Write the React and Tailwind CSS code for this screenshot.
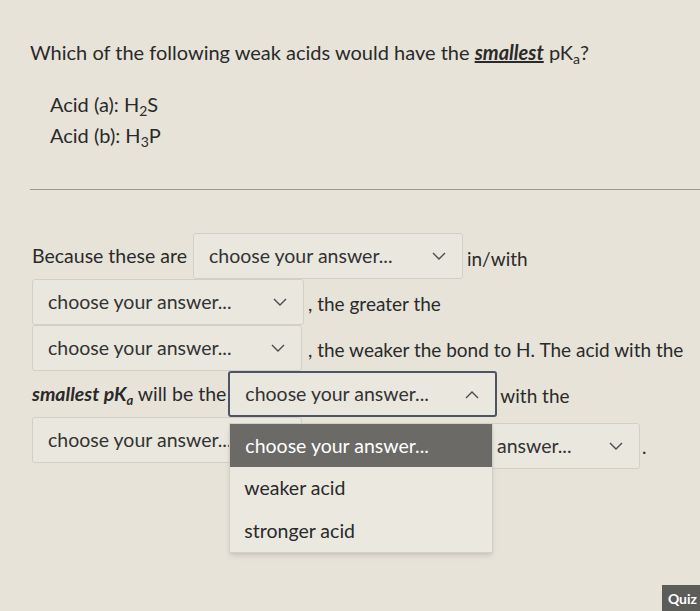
import React from "react";

const font = { fontFamily: "Lato, 'Open Sans', sans-serif" };

function Chevron({ up = false }) {
  return (
    <svg width="14" height="9" viewBox="0 0 14 9" className="shrink-0">
      <path
        d={up ? "M1 8 L7 2 L13 8" : "M1 1 L7 7 L13 1"}
        fill="none"
        stroke="#4b4b4b"
        strokeWidth="1.4"
      />
    </svg>
  );
}

function Select({ width = "w-[270px]", focused = false, up = false }) {
  return (
    <div
      className={`${width} h-[46px] shrink-0 flex items-center justify-between pl-[15px] pr-[16px] rounded-[3px] bg-[#eae7df] ${
        focused ? "border-2 border-[#4d5563]" : "border border-[#d3cfc6]"
      }`}
    >
      <span className="text-[19.5px] text-[#333]">choose your answer...</span>
      <Chevron up={up} />
    </div>
  );
}

export default function App() {
  return (
    <div
      className="relative w-[700px] h-[611px] overflow-hidden bg-[#e7e3d9] text-[#2a2a2a]"
      style={font}
    >
      {/* question */}
      <div className="pt-[38px] pl-[30px] text-[20px] leading-[28px]">
        Which of the following weak acids would have the{" "}
        <span className="font-bold italic underline">smallest</span> pK
        <sub className="text-[14px]">a</sub>?
      </div>

      <div className="mt-[23px] pl-[50px] text-[20px] leading-[31px]">
        <div>
          Acid (a): H<sub className="text-[14px]">2</sub>S
        </div>
        <div>
          Acid (b): H<sub className="text-[14px]">3</sub>P
        </div>
      </div>

      <div className="mt-[38px] ml-[30px] border-t border-[#9d998f]"></div>

      {/* fill-in sentence */}
      <div className="mt-[43px] pl-[32px] text-[19px] flex flex-col">
        <div className="flex items-center">
          <span className="text-[19.5px]">Because these are</span>
          <div className="ml-[6px]">
            <Select />
          </div>
          <span className="ml-[4px] mt-[6px]">in/with</span>
        </div>

        <div className="flex items-center">
          <Select width="w-[272px]" />
          <span className="ml-[4px] mt-[4px]">, the greater the</span>
        </div>

        <div className="flex items-center">
          <Select />
          <span className="ml-[6px] mt-[4px]">
            , the weaker the bond to H. The acid with the
          </span>
        </div>

        <div className="flex items-center">
          <span className="text-[19.5px]">
            <span className="font-bold italic">
              smallest pK<sub className="text-[13px]">a</sub>
            </span>{" "}
            will be the
          </span>
          <div className="relative ml-[2px]">
            <Select width="w-[269px]" focused up />
            {/* open menu */}
            <div className="absolute left-[1px] top-[52px] w-[264px] z-10 bg-[#ebe8e0] border border-[#d3cfc6] shadow-md text-[19.5px]">
              <div className="h-[43px] flex items-center pl-[15px] bg-[#6b6a66] text-white">
                choose your answer...
              </div>
              <div className="h-[42px] flex items-center pl-[14px]">weaker acid</div>
              <div className="h-[43px] flex items-center pl-[14px]">stronger acid</div>
            </div>
          </div>
          <span className="ml-[3px] mt-[4px]">with the</span>
        </div>

        <div className="flex items-start">
          <Select />
          <div className="ml-[70px] mt-[6px]">
            <Select width="w-[268px]" />
          </div>
          <span className="ml-[2px] mt-[16px]">.</span>
        </div>
      </div>

      <div className="absolute right-0 bottom-0 h-[26px] pl-[6px] pr-[3px] flex items-center bg-[#5c5c59] text-white text-[14px] font-bold">
        Quiz
      </div>
    </div>
  );
}
